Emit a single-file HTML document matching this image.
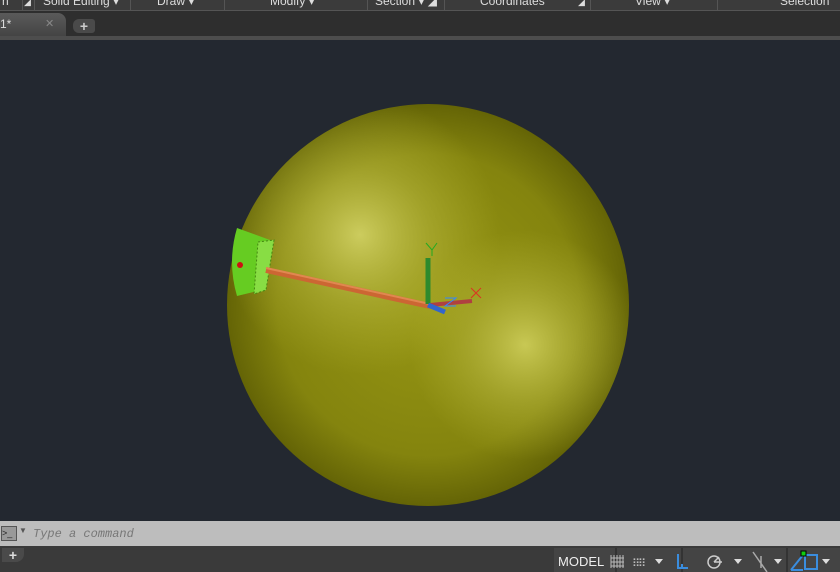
<!DOCTYPE html>
<html><head><style>
body{margin:0;width:840px;height:572px;overflow:hidden;background:#232830;font-family:"Liberation Sans",sans-serif;position:relative}
.tb{position:absolute;top:0;left:0;width:840px;height:10px;background:#3b3b3b;overflow:hidden;border-bottom:1px solid #555}
.tb span{position:absolute;top:-6px;color:#ddd;font-size:12px}
.tb i{position:absolute;top:0;height:10px;border-left:1px solid #555}
.tabs{position:absolute;top:11px;left:0;width:840px;height:25px;background:#2e2e2e}
.bar{position:absolute;top:36px;left:0;width:840px;height:4px;background:#4d4d4d}
.cmd{position:absolute;top:521px;left:0;width:840px;height:25px;background:#bdbdbd}
.st{position:absolute;top:546px;left:0;width:840px;height:26px;background:#3a3a3a}
</style></head><body>
<div class="tb">
<span style="left:2px">n</span><i style="left:22px"></i><span style="left:24px;font-size:9px;top:-3px">◢</span>
<i style="left:34px"></i><span style="left:43px">Solid Editing ▾</span>
<i style="left:130px"></i><span style="left:157px">Draw ▾</span>
<i style="left:224px"></i><span style="left:270px">Modify ▾</span>
<i style="left:367px"></i><span style="left:375px">Section ▾ ◢</span>
<i style="left:444px"></i><span style="left:480px">Coordinates</span><span style="left:578px;font-size:9px;top:-3px">◢</span>
<i style="left:590px"></i><span style="left:635px">View ▾</span>
<i style="left:717px"></i><span style="left:780px">Selection</span>
</div>
<div class="tabs">
<div style="position:absolute;left:0;top:2px;width:66px;height:23px;background:linear-gradient(#5a5a5a,#444);border-radius:0 8px 0 0"></div>
<span style="position:absolute;left:0;top:6px;color:#ddd;font-size:12px">1*</span>
<span style="position:absolute;left:45px;top:6px;color:#888;font-size:11px">✕</span>
<div style="position:absolute;left:73px;top:8px;width:22px;height:14px;background:#4a4a4a;border-radius:6px 3px 3px 6px;color:#ccc;font-size:14px;line-height:14px;text-align:center;font-weight:bold">+</div>
</div>
<div class="bar"></div>
<svg style="position:absolute;left:0;top:40px" width="840" height="481">
<defs>
<radialGradient id="g" cx="428" cy="265" r="201" gradientUnits="userSpaceOnUse">
<stop offset="0" stop-color="#969614"/><stop offset="0.75" stop-color="#84840e"/><stop offset="1" stop-color="#646406"/></radialGradient>
<radialGradient id="h1" cx="360" cy="195" r="140" gradientUnits="userSpaceOnUse"><stop offset="0" stop-color="#cccc5e" stop-opacity="1"/><stop offset="0.5" stop-color="#b8b840" stop-opacity=".5"/><stop offset="1" stop-color="#b0b030" stop-opacity="0"/></radialGradient>
<radialGradient id="h2" cx="525" cy="305" r="115" gradientUnits="userSpaceOnUse"><stop offset="0" stop-color="#c8c854" stop-opacity="1"/><stop offset="0.5" stop-color="#b8b840" stop-opacity=".5"/><stop offset="1" stop-color="#b0b030" stop-opacity="0"/></radialGradient>
</defs>
<circle cx="428" cy="265" r="201" fill="url(#g)"/>
<circle cx="428" cy="265" r="201" fill="url(#h1)"/>
<circle cx="428" cy="265" r="201" fill="url(#h2)"/>
<path d="M237 188 L270 200 L262 250 L237 256 Q227 222 237 188Z" fill="#66cc22"/>
<path d="M258 202 L274 200 L266 250 L254 254Z" fill="#88dd44" stroke="#448811" stroke-dasharray="2 2"/>
<circle cx="240" cy="225" r="3" fill="#cc1111"/>
<line x1="266" y1="230" x2="430" y2="266" stroke="#cc6633" stroke-width="6"/>
<line x1="266" y1="228" x2="430" y2="264" stroke="#e08850" stroke-width="2"/>
<line x1="428" y1="218" x2="428" y2="264" stroke="#2d8a2d" stroke-width="5"/>
<path d="M426 203 L432 210 L437 203 M432 210 L432 216" stroke="#22aa22" fill="none"/>
<line x1="430" y1="265" x2="472" y2="261" stroke="#b04040" stroke-width="4"/>
<path d="M471 248 L481 258 M481 248 L471 258" stroke="#dd3322" fill="none"/>
<line x1="428" y1="265" x2="445" y2="272" stroke="#3366cc" stroke-width="5"/>
<path d="M445 258 L456 258 L445 266 L456 266" stroke="#3388ff" fill="none"/>
</svg>
<div class="cmd">
<div style="position:absolute;left:1px;top:5px;width:14px;height:13px;border:1px solid #555;background:#999;font-size:9px;line-height:13px;color:#222">&gt;_</div>
<span style="position:absolute;left:19px;top:5px;font-size:8px;color:#555">▼</span>
<span style="position:absolute;left:33px;top:6px;font-family:'Liberation Mono',monospace;font-style:italic;font-size:12px;color:#777">Type a command</span>
</div>
<div class="st">
<div style="position:absolute;left:2px;top:2px;width:22px;height:14px;background:#4a4a4a;border-radius:0 0 8px 0;color:#ddd;font-size:14px;line-height:14px;text-align:center;font-weight:bold">+</div>
<svg style="position:absolute;left:554px;top:0" width="286" height="26">
<rect x="0" y="2" width="286" height="24" fill="#444"/>
<line x1="62" y1="2" x2="62" y2="26" stroke="#333" stroke-width="2"/>
<line x1="128" y1="2" x2="128" y2="26" stroke="#333" stroke-width="2"/>
<line x1="233" y1="2" x2="233" y2="26" stroke="#333" stroke-width="2"/>
<text x="4" y="20" fill="#eee" font-size="13" font-family="Liberation Sans">MODEL</text>
<g stroke="#bbb" stroke-width="1">
<path d="M57 9v13M60 9v13M63 9v13M66 9v13M69 9v13M57 12h13M57 16h13M57 20h13"/>
</g>
<text x="78" y="21" fill="#bbb" font-size="11" letter-spacing="-2">⠿⠿</text>
<path d="M101 13l4 5 4-5z" fill="#ddd"/>
<path d="M124 8v14h10M128 18v4" stroke="#3a8dde" stroke-width="2" fill="none"/>
<circle cx="160" cy="16" r="6" stroke="#ccc" stroke-width="1.5" fill="none"/>
<path d="M160 16h8M160 16l5-5" stroke="#ccc" stroke-width="1.5"/>
<path d="M180 13l4 5 4-5z" fill="#ddd"/>
<path d="M199 6l14 20M207 10v12" stroke="#aaa" stroke-width="1.5"/>
<path d="M220 13l4 5 4-5z" fill="#ddd"/>
<path d="M237 24l12-15M237 24h12" stroke="#3a8dde" stroke-width="2" fill="none"/>
<rect x="251" y="9" width="12" height="14" stroke="#3a8dde" stroke-width="2" fill="none"/>
<rect x="247" y="5" width="5" height="5" fill="#1c1" stroke="#000"/>
<path d="M268 13l4 5 4-5z" fill="#ddd"/>
</svg>
</div>
</body></html>
